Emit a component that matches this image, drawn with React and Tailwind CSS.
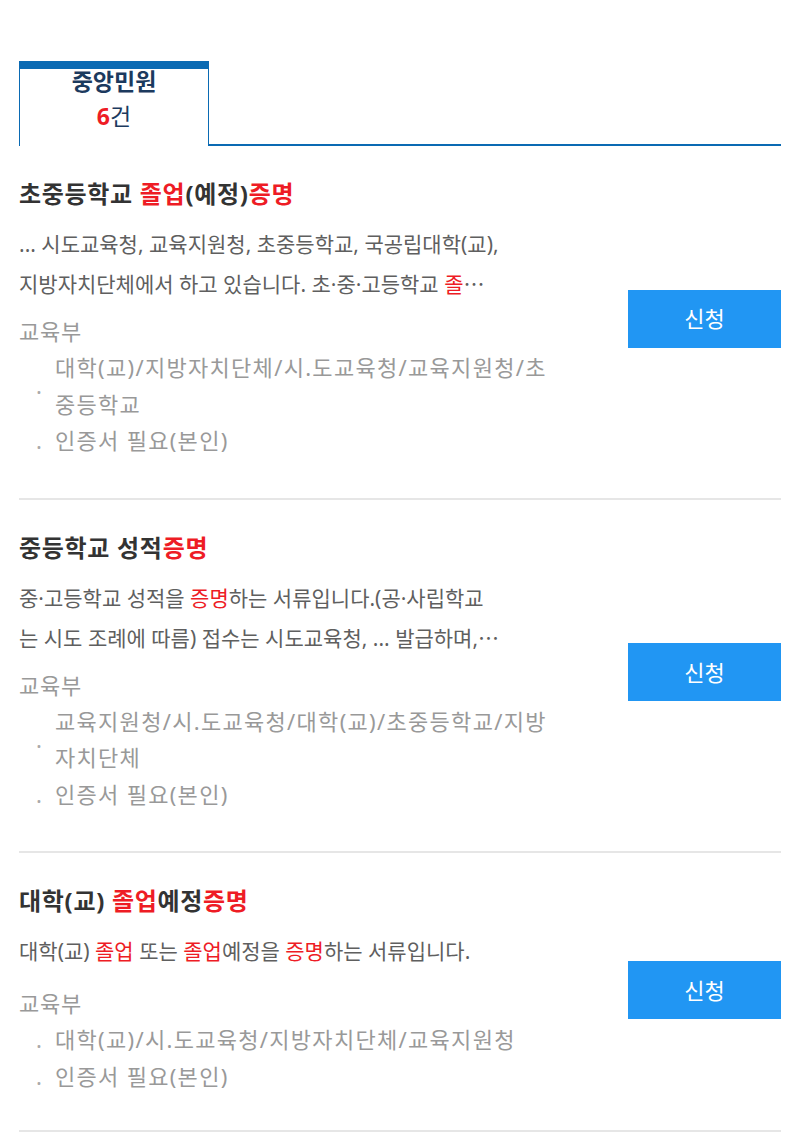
import React from "react";

const items = [
  {
    title: [["초중등학교 ", false], ["졸업", true], ["(예정)", false], ["증명", true]],
    desc: [
      [["... 시도교육청, 교육지원청, 초중등학교, 국공립대학(교),", false]],
      [["지방자치단체에서 하고 있습니다. 초·중·고등학교 ", false], ["졸", true], ["…", "dots"]],
    ],
    agency: "교육부",
    list: [
      ["대학(교)/지방자치단체/시.도교육청/교육지원청/초", "중등학교"],
      ["인증서 필요(본인)"],
    ],
  },
  {
    title: [["중등학교 성적", false], ["증명", true]],
    desc: [
      [["중·고등학교 성적을 ", false], ["증명", true], ["하는 서류입니다.(공·사립학교", false]],
      [["는 시도 조례에 따름) 접수는 시도교육청, ... 발급하며,", false], ["…", "dots"]],
    ],
    agency: "교육부",
    list: [
      ["교육지원청/시.도교육청/대학(교)/초중등학교/지방", "자치단체"],
      ["인증서 필요(본인)"],
    ],
  },
  {
    title: [["대학(교) ", false], ["졸업", true], ["예정", false], ["증명", true]],
    desc: [
      [
        ["대학(교) ", false],
        ["졸업", true],
        [" 또는 ", false],
        ["졸업", true],
        ["예정을 ", false],
        ["증명", true],
        ["하는 서류입니다.", false],
      ],
    ],
    agency: "교육부",
    list: [["대학(교)/시.도교육청/지방자치단체/교육지원청"], ["인증서 필요(본인)"]],
  },
];

const Parts = ({ parts }) =>
  parts.map(([text, kind], i) => (
    <span
      key={i}
      className={
        kind === true
          ? "text-[#ee1c25]"
          : kind === "dots"
          ? "leading-none font-['Noto_Sans_CJK_KR',sans-serif] tracking-[-2px]"
          : ""
      }
    >
      {text}
    </span>
  ));

const Row = ({ item }) => {
  const short = item.desc.length < 2;
  return (
    <div
      className={
        "flex items-center border-b-2 border-[#e6e6e6] pt-[33px] " +
        (short ? "pb-[36px]" : "pb-[39px]")
      }
    >
      <div className="flex-1 min-w-0">
        <h3 className="text-[24px] leading-[30px] font-bold text-[#333] tracking-[0.7px] whitespace-nowrap">
          <Parts parts={item.title} />
        </h3>
        <div className="mt-[15px] text-[21px] leading-[40px] text-[#5f5f5f]">
          {item.desc.map((line, i) => (
            <p key={i} className="whitespace-nowrap">
              <Parts parts={line} />
            </p>
          ))}
        </div>
        <p
          className={
            (short ? "mt-[14px]" : "mt-[9px]") +
            " text-[22px] leading-[36px] text-[#999] tracking-[0.8px]"
          }
        >
          {item.agency}
        </p>
        <ul className="pl-[17px]">
          {item.list.map((lines, i) => (
            <li
              key={i}
              className="flex items-center text-[22px] leading-[36.5px] text-[#999] tracking-[1.3px]"
            >
              <span className="w-[19px] shrink-0 text-[#aaa]">.</span>
              <span className="whitespace-nowrap">
                {lines.map((l, j) => (
                  <span key={j} className="block">
                    {l}
                  </span>
                ))}
              </span>
            </li>
          ))}
        </ul>
      </div>
      <button className="w-[153px] h-[58px] shrink-0 bg-[#2196f3] text-white text-[22px]">
        신청
      </button>
    </div>
  );
};

export default function App() {
  return (
    <div className="bg-white min-h-screen px-[19px] pt-[61px] font-['Noto_Sans','Noto_Sans_CJK_KR',sans-serif]">
      <div className="flex items-end">
        <div className="w-[190px] h-[85px] border-t-[8px] border-x border-[#0a6ab3] text-center text-[23px] text-[#1c3a5e]">
          <p className="-mt-[2px] leading-[28px] font-bold">중앙민원</p>
          <p className="mt-[7px] leading-[28px]">
            <span className="font-bold text-[#ee1c25]">6</span>건
          </p>
        </div>
        <div className="flex-1 border-b-2 border-[#0a6ab3]" />
      </div>
      {items.map((item, i) => (
        <Row key={i} item={item} />
      ))}
    </div>
  );
}
